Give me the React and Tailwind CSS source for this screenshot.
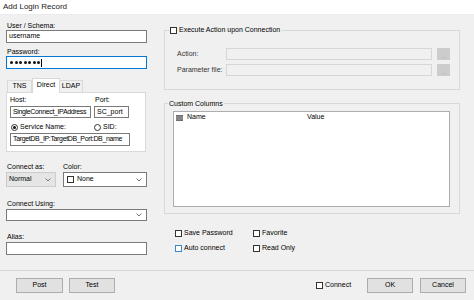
import React from 'react';

const Check = ({ blue }) => (
  <span
    className={`inline-block w-[7px] h-[7px] bg-white border shrink-0 ${blue ? 'border-[#3b86d4]' : 'border-[#333333]'}`}
  />
);

const Radio = ({ on }) => (
  <span className="inline-flex items-center justify-center w-[7px] h-[7px] rounded-full border border-[#333333] bg-white shrink-0">
    {on && <span className="w-[3px] h-[3px] rounded-full bg-[#111111]" />}
  </span>
);

const Chevron = () => (
  <svg width="6" height="4" viewBox="0 0 6 4" className="shrink-0">
    <path d="M0.5 0.5 L3 3 L5.5 0.5" fill="none" stroke="#555555" strokeWidth="0.8" />
  </svg>
);

const Label = ({ children, className = '' }) => (
  <div className={`h-[9px] leading-[9px] ${className}`}>{children}</div>
);

const Input = ({ className = '', children }) => (
  <div className={`bg-white border border-[#7a7a7a] pl-[2px] flex items-center overflow-hidden whitespace-nowrap ${className}`}>
    {children}
  </div>
);

const Button = ({ children, className = '' }) => (
  <div className={`h-[15px] bg-[#e1e1e1] border border-[#adadad] flex items-center justify-center ${className}`}>
    {children}
  </div>
);

const App = () => {
  return (
    <div
      className="w-[474px] h-[300px] bg-[#f0f0f0] text-[7px] text-black overflow-hidden flex flex-col"
      style={{ fontFamily: '"Liberation Sans", Arial, sans-serif' }}
    >
      {/* Title bar */}
      <div className="h-[15px] bg-white border-b border-[#ececec] pl-[3px] flex items-center text-[8px] text-[#222222] shrink-0">
        Add Login Record
      </div>

      <div className="flex h-[255px] shrink-0">
        {/* Left column */}
        <div className="w-[141px] ml-[6px] pt-[6px] flex flex-col">
          <Label className="pl-[1px]">User / Schema:</Label>
          <Input className="h-[13px]">username</Input>
          <Label className="mt-[4px] pl-[1px]">Password:</Label>
          <Input className="h-[13px] border-[#0078d7]">
            <div className="flex gap-[1.5px] ml-[1px]">
              {[0, 1, 2, 3, 4, 5, 6].map(i => (
                <span key={i} className="w-[3px] h-[3px] rounded-full bg-[#111111]" />
              ))}
            </div>
            <span className="w-px h-[8px] bg-black ml-[1px]" />
          </Input>

          {/* Tabs */}
          <div className="mt-[8px] flex items-end h-[15px] pl-[1px]">
            <div className="h-[12px] w-[25px] border border-b-0 border-[#d9d9d9] flex items-center justify-center">TNS</div>
            <div className="h-[15px] w-[28px] bg-white border border-b-0 border-[#d9d9d9] flex items-center justify-center -mb-px relative z-10 pb-[2px]">
              Direct
            </div>
            <div className="h-[12px] w-[23px] border border-b-0 border-l-0 border-[#d9d9d9] flex items-center justify-center">LDAP</div>
          </div>
          <div className="w-[140px] h-[60px] bg-white border border-[#d9d9d9] px-[3px] pt-[2px] flex flex-col">
            <div className="flex gap-[3px]">
              <div className="w-[81px]">
                <Label>Host:</Label>
                <Input className="h-[12px] mt-[2px] tracking-[-0.35px] pl-[1px]">SingleConnect_IPAddress</Input>
              </div>
              <div className="w-[35px]">
                <Label className="pl-px">Port:</Label>
                <Input className="h-[12px] mt-[2px]">SC_port</Input>
              </div>
            </div>
            <div className="flex items-center h-[11px] mt-[4px]">
              <div className="flex items-center gap-[2px] w-[84px] pl-px">
                <Radio on />
                <span>Service Name:</span>
              </div>
              <div className="flex items-center gap-[2px]">
                <Radio />
                <span>SID:</span>
              </div>
            </div>
            <Input className="h-[13px] w-[120px] tracking-[-0.35px] pl-[1px]">TargetDB_IP:TargetDB_Port:DB_name</Input>
          </div>

          <div className="flex mt-[10px]">
            <Label className="w-[57px] pl-[1px]">Connect as:</Label>
            <Label>Color:</Label>
          </div>
          <div className="flex mt-[1px] gap-[7px]">
            <div className="w-[50px] h-[15px] bg-[#e5e5e5] border border-[#cccccc] flex items-center justify-between pl-[2px] pr-[4px]">
              <span>Normal</span>
              <Chevron />
            </div>
            <div className="w-[84px] h-[15px] bg-white border border-[#7a7a7a] flex items-center justify-between pl-[3px] pr-[4px]">
              <div className="flex items-center gap-[3px]">
                <span className="w-[7px] h-[7px] border border-[#333333] bg-white" />
                <span>None</span>
              </div>
              <Chevron />
            </div>
          </div>

          <Label className="mt-[12px] pl-[1px]">Connect Using:</Label>
          <div className="mt-[1px] h-[12px] bg-white border border-[#7a7a7a] flex items-center justify-end pr-[4px]">
            <Chevron />
          </div>

          <Label className="mt-[11px] pl-[1px]">Alias:</Label>
          <Input className="h-[13px] mt-[1px]" />
        </div>

        {/* Right column */}
        <div className="w-[296px] ml-[17px] flex flex-col">
          <fieldset className="mt-[11px] border border-[#d8d8d8] pb-[13px]">
            <legend className="ml-[5px] pr-[2px] h-[9px] flex items-center gap-[2px]">
              <Check />
              <span>Execute Action upon Connection</span>
            </legend>
            <div className="mt-[13px] flex items-center h-[12px] pl-[12px]">
              <span className="w-[49px] text-[#333333]">Action:</span>
              <div className="w-[206px] h-full border border-[#d6d6d6] bg-[#f0f0f0]" />
              <div className="ml-[5px] w-[13px] h-full bg-[#cccccc] text-[#a0a0a0] text-[5px] flex items-end justify-center leading-[8px]">...</div>
            </div>
            <div className="mt-[4px] flex items-center h-[12px] pl-[12px]">
              <span className="w-[49px] text-[#333333]">Parameter file:</span>
              <div className="w-[206px] h-full border border-[#d6d6d6] bg-[#f0f0f0]" />
              <div className="ml-[5px] w-[13px] h-full bg-[#cccccc] text-[#a0a0a0] text-[5px] flex items-end justify-center leading-[8px]">...</div>
            </div>
          </fieldset>

          <fieldset className="mt-[9px] border border-[#d8d8d8] pb-[6px]">
            <legend className="ml-[3px] px-px h-[9px] leading-[9px]">Custom Columns</legend>
            <div className="mt-[3px] ml-[8px] w-[277px] h-[96px] bg-white border border-[#adadad]">
              <div className="flex items-center h-[11px] pl-[2px]">
                <svg width="7" height="6" viewBox="0 0 7 6" className="shrink-0">
                  <rect x="0" y="0" width="7" height="6" fill="#6f6f6f" />
                  <path d="M0 2 H7 M0 4 H7" stroke="#bdbdbd" strokeWidth="0.6" />
                </svg>
                <span className="ml-[4px] w-[120px]">Name</span>
                <span>Value</span>
              </div>
            </div>
          </fieldset>

          <div className="mt-[15px] ml-[11px] flex flex-col gap-[6px]">
            <div className="flex h-[9px]">
              <div className="w-[78px] flex items-center gap-[2px]">
                <Check />
                <span>Save Password</span>
              </div>
              <div className="flex items-center gap-[2px]">
                <Check />
                <span>Favorite</span>
              </div>
            </div>
            <div className="flex h-[9px]">
              <div className="w-[78px] flex items-center gap-[2px]">
                <Check blue />
                <span>Auto connect</span>
              </div>
              <div className="flex items-center gap-[2px]">
                <Check />
                <span>Read Only</span>
              </div>
            </div>
          </div>
        </div>
      </div>

      {/* Bottom bar */}
      <div className="border-t border-[#d4d4d4] flex-1 flex items-center pb-[1px]">
        <Button className="ml-[16px] w-[47px]">Post</Button>
        <Button className="ml-[6px] w-[46px]">Test</Button>
        <div className="ml-auto flex items-center gap-[2px] w-[51px]">
          <Check />
          <span>Connect</span>
        </div>
        <Button className="w-[46px]">OK</Button>
        <Button className="ml-[7px] mr-[8px] w-[46px]">Cancel</Button>
      </div>
    </div>
  );
};

export default App;
